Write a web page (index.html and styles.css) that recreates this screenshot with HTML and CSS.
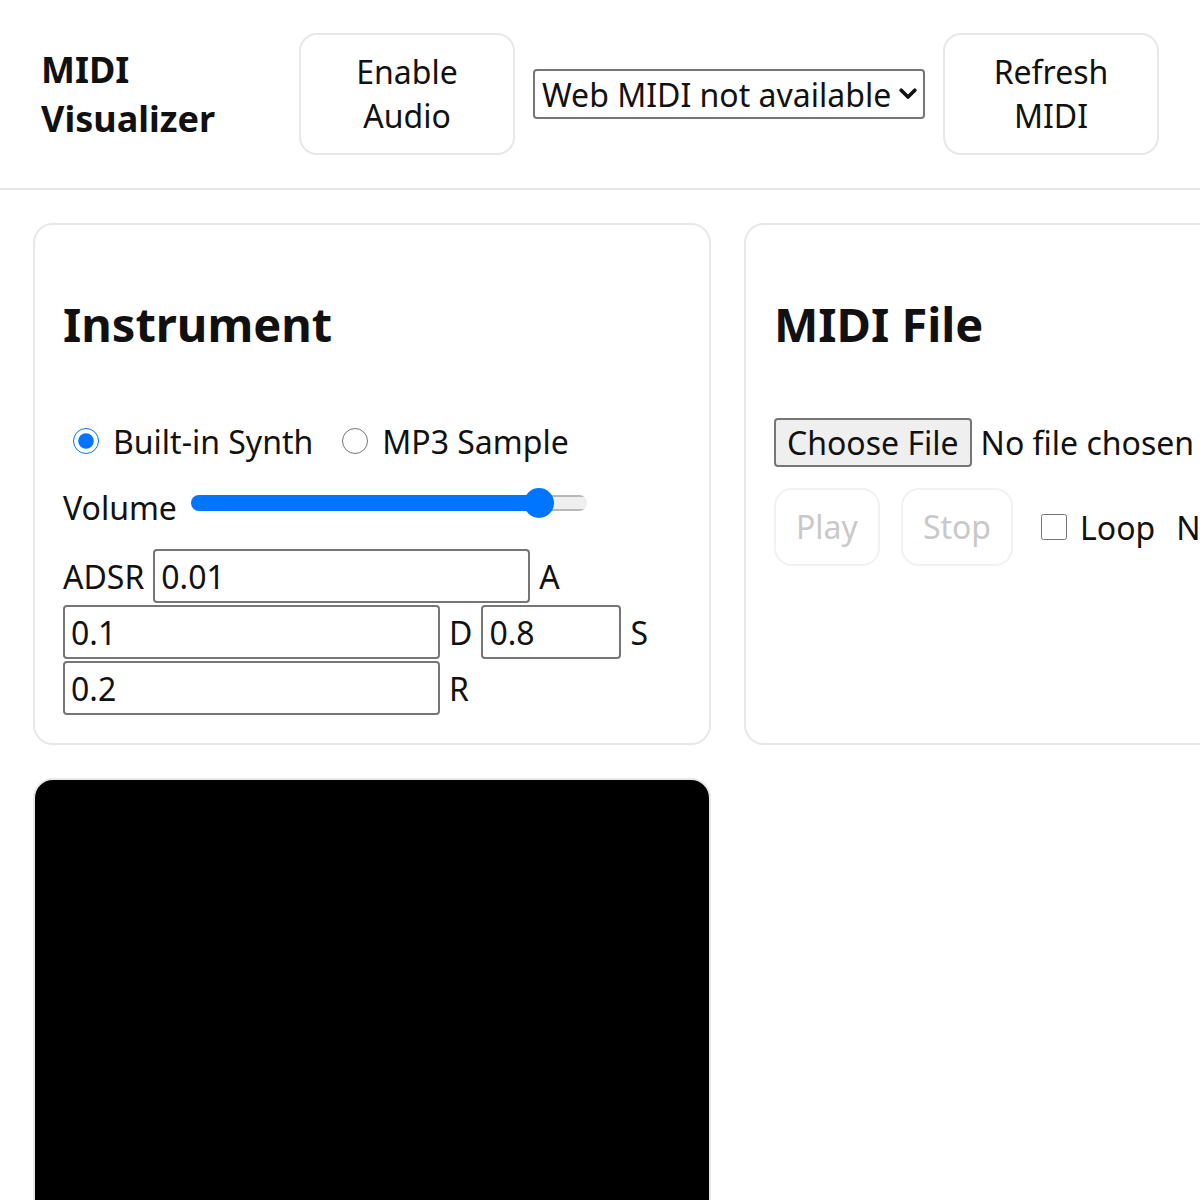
FILE: index.html
```html
<!DOCTYPE html>
<html lang="en">
<head>
<meta charset="utf-8">
<title>MIDI Visualizer</title>
<link rel="stylesheet" href="styles.css">
</head>
<body>
<header class="topbar">
  <h1 class="title">MIDI Visualizer</h1>
  <button class="btn btn-head">Enable Audio</button>
  <span class="select-wrap">
    <select class="midi-select"><option>Web MIDI not available</option></select>
    <svg class="chevron" width="18" height="12" viewBox="0 0 18 12" aria-hidden="true"><polyline points="2.2,2.2 9,9 15.8,2.2" fill="none" stroke="#111" stroke-width="3.6" stroke-linecap="round" stroke-linejoin="round"/></svg>
  </span>
  <button class="btn btn-head">Refresh MIDI</button>
</header>
<main class="grid">
  <section class="card card-inst">
    <h2 class="card-title">Instrument</h2>
    <div class="row radios">
      <label class="radio-label"><input type="radio" name="src" class="radio" checked> Built-in Synth</label>
      <label class="radio-label"><input type="radio" name="src" class="radio"> MP3 Sample</label>
    </div>
    <div class="row volume">
      <span>Volume</span>
      <input type="range" class="slider" min="0" max="1" step="0.01" value="0.905" style="--fill: 87.6%">
    </div>
    <div class="adsr">
      <span>ADSR</span>
      <input type="text" class="field field-wide" value="0.01">
      <span>A</span>
      <input type="text" class="field field-wide" value="0.1">
      <span>D</span>
      <input type="text" class="field field-short" value="0.8">
      <span>S</span>
      <input type="text" class="field field-wide" value="0.2">
      <span>R</span>
    </div>
  </section>
  <section class="card">
    <h2 class="card-title">MIDI File</h2>
    <div class="row file-row">
      <input type="file" class="file">
    </div>
    <div class="row controls">
      <button class="btn btn-disabled" disabled>Play</button>
      <button class="btn btn-disabled" disabled>Stop</button>
      <label class="check-label"><input type="checkbox" class="check"> Loop</label>
      <span class="status">N</span>
    </div>
  </section>
  <section class="card canvas-card"></section>
</main>
</body>
</html>
```
FILE: styles.css
```css
html, body {
  margin: 0;
  padding: 0;
  background: #fff;
  overflow: hidden;
}
body {
  font-family: "Noto Sans", "Open Sans", sans-serif;
  font-size: 32px;
  color: #111;
  width: 1200px;
}
.topbar {
  display: flex;
  align-items: center;
  gap: 18px;
  padding: 33px 41px;
  border-bottom: 2px solid #e6e6e6;
  height: 190px;
  box-sizing: border-box;
}
.title {
  margin: 0;
  width: 240px;
  flex: none;
  font-size: 36px;
  font-weight: 700;
  line-height: 1.362;
}
.btn {
  font-family: inherit;
  font-size: 32px;
  line-height: 1.362;
  color: #111;
  background: #fff;
  border: 2px solid #e8e8e8;
  border-radius: 18px;
  padding: 15px 20px;
  cursor: pointer;
}
.btn-head {
  width: 216px;
  flex: none;
  height: 122px;
}
.btn-disabled {
  color: #c9c9c9;
  border-color: #f2f2f2;
  cursor: default;
}
.select-wrap {
  position: relative;
  display: block;
  flex: none;
  width: 392px;
  height: 50px;
}
.midi-select {
  -webkit-appearance: none;
  appearance: none;
  width: 392px;
  height: 50px;
  font-family: inherit;
  font-size: 32px;
  color: #111;
  background: #fff;
  border: 2px solid #767676;
  border-radius: 4px;
  padding: 0 4px 0 7px;
}
.chevron {
  position: absolute;
  right: 8px;
  top: 19px;
  pointer-events: none;
}
.grid {
  display: grid;
  grid-template-columns: 678px 678px;
  column-gap: 33px;
  row-gap: 33px;
  padding: 33px;
  width: max-content;
}
.card {
  border: 2px solid #e8e8e8;
  border-radius: 20px;
  padding: 27px 28px;
  display: flex;
  flex-direction: column;
  gap: 22px;
  background: #fff;
}
.card-inst {
  padding-bottom: 28px;
}
.card-title {
  margin: 40px 0;
  font-size: 47px;
  font-weight: 700;
  line-height: 1.39;
}
.row {
  display: flex;
  align-items: center;
  min-height: 44px;
}
.radio-label {
  display: flex;
  align-items: center;
  margin-right: 19px;
}
.radio {
  width: 26px;
  height: 26px;
  margin: 0 14px 0 10px;
  accent-color: #0075ff;
}
.volume {
  gap: 14px;
}
.slider {
  -webkit-appearance: none;
  appearance: none;
  width: 396px;
  height: 30px;
  margin: 0 0 8px 0;
  background: transparent;
}
.slider::-webkit-slider-runnable-track {
  height: 16px;
  border-radius: 8px;
  background:
    linear-gradient(#0075ff, #0075ff) 0 0 / var(--fill) 100% no-repeat,
    linear-gradient(to bottom, #b8b8b8 0 2px, #efefef 2px calc(100% - 2px), #b8b8b8 calc(100% - 2px));
}
.slider::-webkit-slider-thumb {
  -webkit-appearance: none;
  appearance: none;
  width: 30px;
  height: 30px;
  border-radius: 50%;
  background: #0075ff;
  margin-top: -7px;
  border: none;
}
.adsr {
  display: flex;
  flex-wrap: wrap;
  align-items: center;
  column-gap: 9px;
  row-gap: 2px;
  margin-top: -2px;
}
.field {
  box-sizing: border-box;
  height: 54px;
  padding: 0 6px;
  font-family: inherit;
  font-size: 32px;
  color: #111;
  border: 2px solid #767676;
  border-radius: 4px;
  background: #fff;
}
.field-wide {
  width: 377px;
}
.field-short {
  width: 140px;
}
.file-row {
  margin-top: -1px;
  margin-bottom: -1px;
}
.file {
  font-family: inherit;
  font-size: 32px;
  color: #111;
  width: 600px;
}
.file::file-selector-button {
  font-family: inherit;
  font-size: 32px;
  color: #111;
  background: #efefef;
  border: 2px solid #767676;
  border-radius: 4px;
  padding: 1px 11px;
  margin-right: 9px;
}
.controls {
  gap: 21px;
}
.check-label {
  display: flex;
  align-items: center;
  white-space: nowrap;
}
.check {
  width: 26px;
  height: 26px;
  margin: 0 13px 0 7px;
}
.status {
  white-space: nowrap;
}
.canvas-card {
  background: #000;
  height: 760px;
  padding: 0;
}
```
